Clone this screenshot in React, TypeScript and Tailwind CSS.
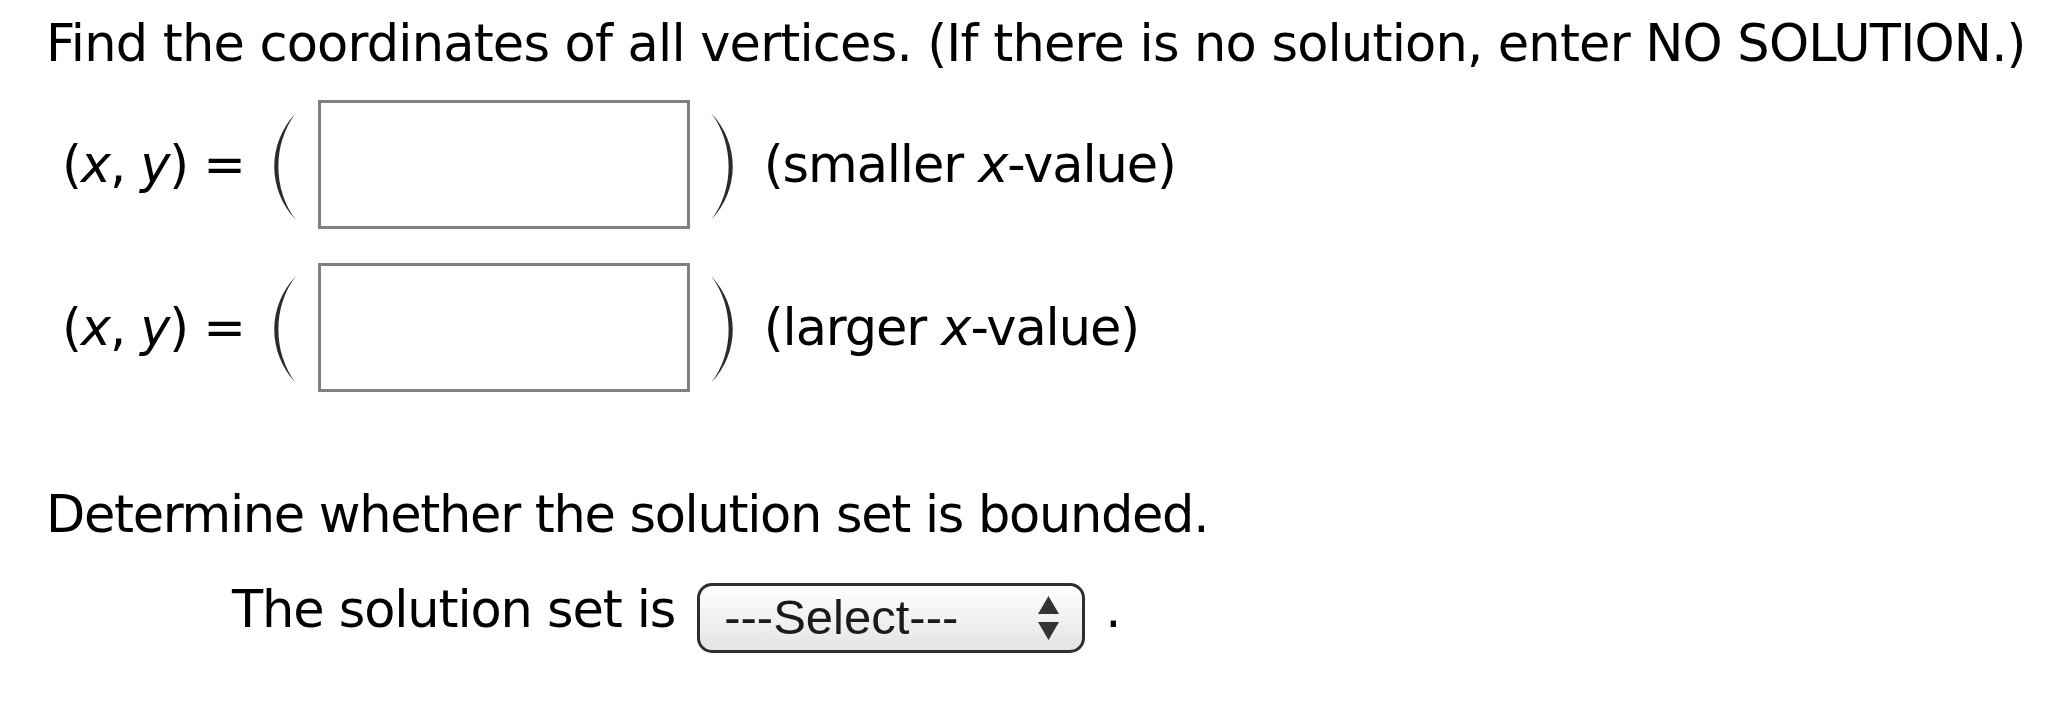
import React from "react";

const Paren = ({ side }: { side: "left" | "right" }): JSX.Element => {
  // thin crescent, thicker in the middle like the mac math paren
  const d =
    side === "left"
      ? "M 25 0 C -4 30 -4 77 25 107 C 1.5 77 1.5 30 25 0 Z"
      : "M 2 0 C 31 30 31 77 2 107 C 25.5 77 25.5 30 2 0 Z";
  return (
    <svg width="27" height="107" viewBox="0 0 27 107" className="mt-[4px] shrink-0">
      <path d={d} fill="#2b2b2b" />
    </svg>
  );
};

const VertexRow = ({ label }: { label: string }): JSX.Element => {
  return (
    <div className="flex items-center pl-[16px]">
      <span className="leading-[60px] whitespace-pre">
        (<i>x</i>, <i>y</i>) =
      </span>
      <div className="ml-[26px]">
        <Paren side="left" />
      </div>
      <input
        type="text"
        className="ml-[20px] w-[372px] h-[129px] border-[3px] border-[#808080] bg-white outline-none"
      />
      <div className="ml-[19px]">
        <Paren side="right" />
      </div>
      <span className="ml-[28px] leading-[60px] whitespace-pre">
        ({label} <i>x</i>-value)
      </span>
    </div>
  );
};

export default function App(): JSX.Element {
  return (
    <div className="w-[2046px] h-[708px] bg-white text-black pl-[46px] pt-[14px] font-['DejaVu_Sans',sans-serif] text-[51px] tracking-[-1.1px]">
      <p className="leading-[60px] whitespace-nowrap tracking-[-0.8px]">
        Find the coordinates of all vertices. (If there is no solution, enter NO SOLUTION.)
      </p>

      <div className="mt-[26px] flex flex-col gap-[34px]">
        <VertexRow label="smaller" />
        <VertexRow label="larger" />
      </div>

      <p className="mt-[93px] leading-[60px] whitespace-nowrap tracking-[-1.3px]">
        Determine whether the solution set is bounded.
      </p>

      <div className="mt-[35px] flex items-center pl-[186px]">
        <span className="leading-[60px] mb-[15px] whitespace-pre">The solution set is</span>
        <div className="ml-[22px] relative w-[388px] h-[70px] rounded-[15px] border-[3px] border-[#2e2e2e] bg-gradient-to-b from-white to-[#e4e4e4] flex items-center pl-[24px]">
          <span className="font-['Liberation_Sans',Arial,sans-serif] text-[49px] text-[#1a1a1a] leading-none tracking-normal">
            ---Select---
          </span>
          <svg width="23" height="44" viewBox="0 0 23 44" className="absolute right-[22px] top-[10px]">
            <polygon points="11.5,0 22,18 1,18" fill="#333" />
            <polygon points="1,26 22,26 11.5,44" fill="#333" />
          </svg>
        </div>
        <span className="ml-[20px] leading-[60px] mb-[15px]">.</span>
      </div>
    </div>
  );
}
